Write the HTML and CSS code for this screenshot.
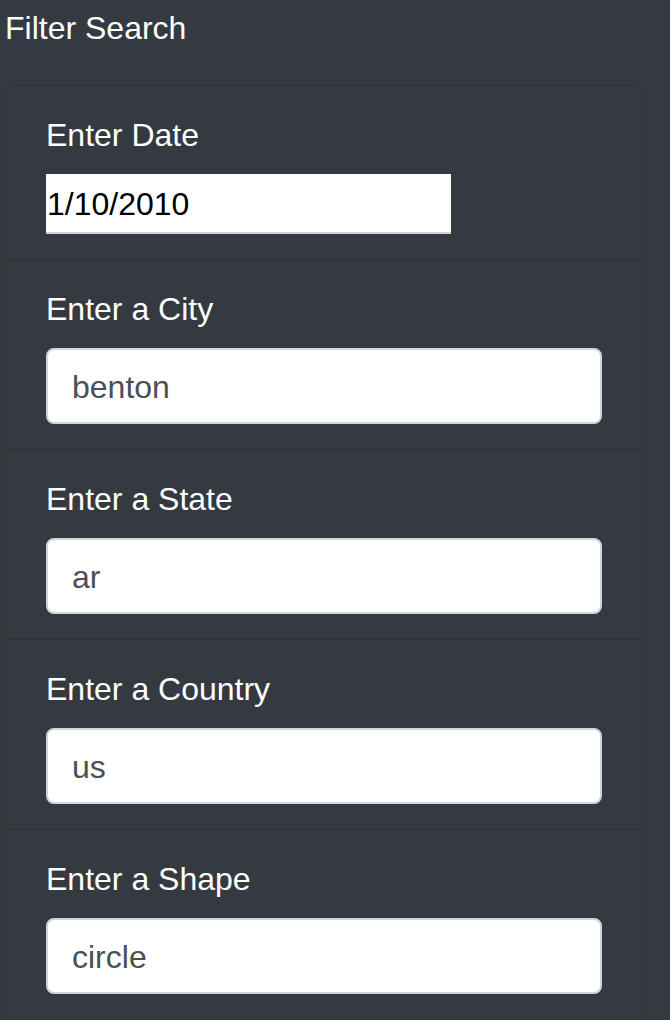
FILE: index.html
```html
<!DOCTYPE html>
<html lang="en">
<head>
<meta charset="utf-8">
<title>Filter Search</title>
<link rel="stylesheet" href="styles.css">
</head>
<body>
  <div class="page">
    <h5 class="title">Filter Search</h5>
    <ul class="filters">
      <li class="filter-item">
        <label class="filter-label" for="datetime">Enter Date</label>
        <input class="date-input" id="datetime" type="text" value="1/10/2010">
      </li>
      <li class="filter-item">
        <label class="filter-label" for="city">Enter a City</label>
        <input class="form-control" id="city" type="text" value="benton">
      </li>
      <li class="filter-item">
        <label class="filter-label" for="state">Enter a State</label>
        <input class="form-control" id="state" type="text" value="ar">
      </li>
      <li class="filter-item">
        <label class="filter-label" for="country">Enter a Country</label>
        <input class="form-control" id="country" type="text" value="us">
      </li>
      <li class="filter-item">
        <label class="filter-label" for="shape">Enter a Shape</label>
        <input class="form-control" id="shape" type="text" value="circle">
      </li>
    </ul>
  </div>
</body>
</html>
```

FILE: styles.css
```css
html, body {
  margin: 0;
  padding: 0;
  background: #343a40;
}

body {
  font-family: "Liberation Sans", Arial, sans-serif;
  color: #fff;
  height: 1020px;
  overflow: hidden;
}

.page {
  display: flex;
  flex-direction: column;
  padding: 0 27px 0 5px;
}

.title {
  margin: 4px 0 33px 0;
  font-size: 32px;
  font-weight: 400;
  line-height: 48px;
  color: #fff;
}

.filters {
  list-style: none;
  margin: 0;
  padding: 0;
  display: flex;
  flex-direction: column;
  border: 1px solid rgba(0, 0, 0, 0.13);
  border-radius: 8px;
}

.filter-item {
  display: flex;
  flex-direction: column;
  align-items: flex-start;
  padding: 24px 40px 25px;
  border-top: 1px solid rgba(0, 0, 0, 0.13);
}

.filter-item:first-child {
  border-top: none;
}

.filter-label {
  font-size: 32px;
  line-height: 50px;
  margin-bottom: 14px;
  color: #fff;
}

.date-input {
  box-sizing: border-box;
  width: 405px;
  height: 60px;
  margin: 0;
  padding: 2px 1px 0;
  border: none;
  border-bottom: 2px solid #d0d0d0;
  background: #fff;
  color: #000;
  font-family: "Liberation Sans", Arial, sans-serif;
  font-size: 32px;
  outline: none;
}

.form-control {
  box-sizing: border-box;
  align-self: stretch;
  height: 76px;
  margin: 0;
  padding: 13px 24px 11px;
  border: 2px solid #ced4da;
  border-radius: 8px;
  background: #fff;
  color: #495057;
  font-family: "Liberation Sans", Arial, sans-serif;
  font-size: 32px;
  line-height: 48px;
  outline: none;
}
```
